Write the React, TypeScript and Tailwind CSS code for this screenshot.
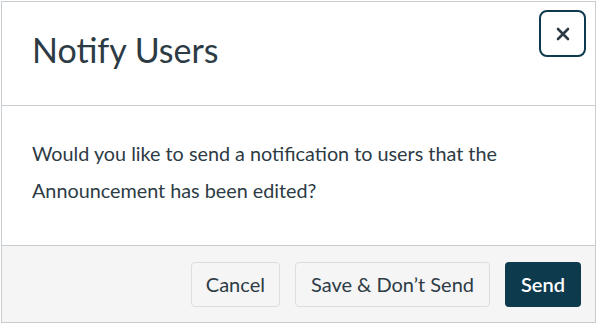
import React from "react";

export default function App() {
  return (
    <div className="w-[597px] h-[324px] bg-white pl-px pt-px" style={{ fontFamily: "Lato, 'Noto Sans', sans-serif" }}>
      <div className="w-[595px] h-[322px] border border-[#c7cdd1] flex flex-col text-[#2d3b45]">
        <div className="h-[104px] border-b border-[#c7cdd1] flex items-start justify-between pl-[30px] pr-[9px]">
          <h1 className="mt-[27px] text-[34px] leading-[42px] font-normal">Notify Users</h1>
          <button className="mt-[8px] w-[47px] h-[47px] rounded-[8px] border-2 border-[#0e3a4e] flex items-center justify-center">
            <svg width="16" height="16" viewBox="0 0 16 16" fill="none">
              <path d="M3 3 L13 13 M13 3 L3 13" stroke="#2d3b45" strokeWidth="2.6" strokeLinecap="round" />
            </svg>
          </button>
        </div>
        <div className="flex-1 px-[30px] pt-[29px]">
          <p className="text-[19.8px] leading-[37px]">
            Would you like to send a notification to users that the
            <br />
            Announcement has been edited?
          </p>
        </div>
        <div className="h-[77px] border-t border-[#c7cdd1] bg-[#f5f5f5] flex items-center justify-end pr-[14px] gap-[15px]">
          <button className="h-[45px] px-[14px] rounded-[4px] border border-[#dbdfe2] bg-[#f5f5f5] text-[20px] text-[#2d3b45]">Cancel</button>
          <button className="h-[45px] px-[15px] rounded-[4px] border border-[#dbdfe2] bg-[#f5f5f5] text-[20px] text-[#2d3b45]">Save &amp; Don’t Send</button>
          <button className="h-[45px] px-[16px] rounded-[4px] bg-[#0e3a4e] text-[20px] font-semibold text-white">Send</button>
        </div>
      </div>
    </div>
  );
}
